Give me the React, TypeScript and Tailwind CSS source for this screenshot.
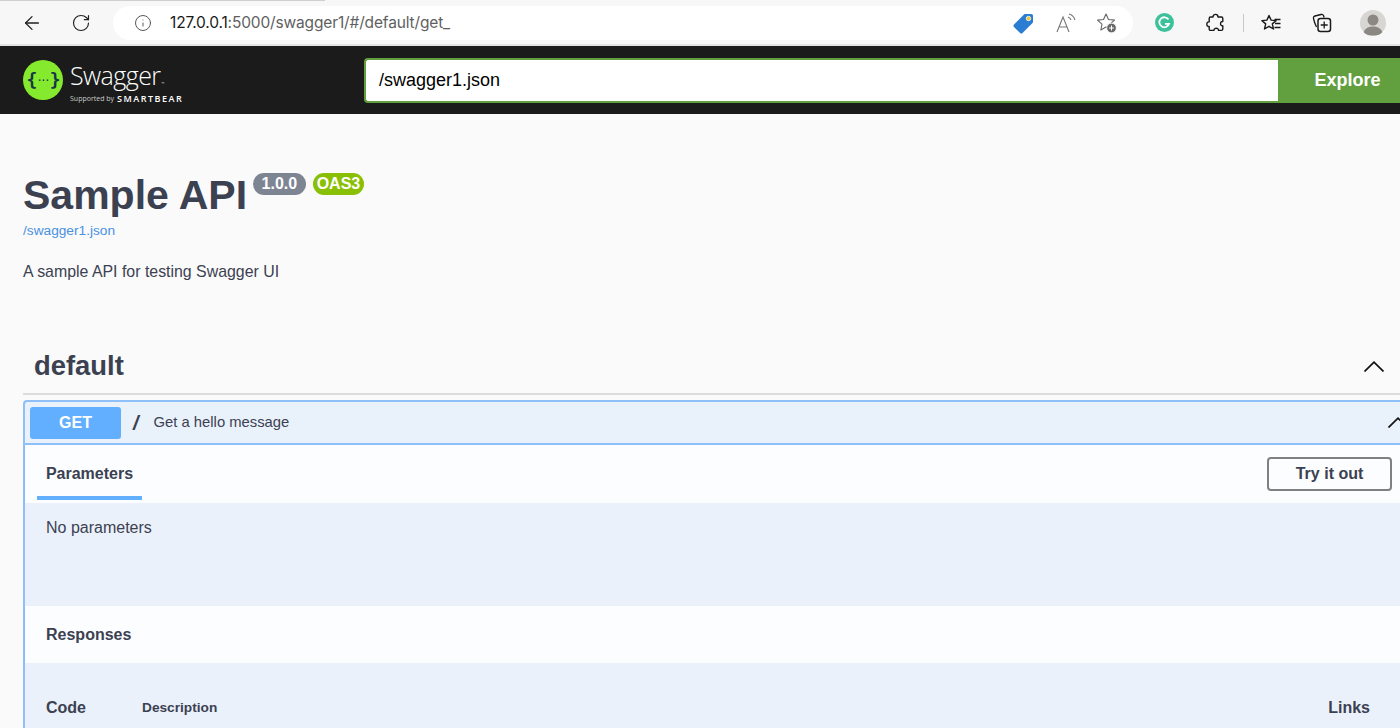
import { ArrowLeft, RotateCw, Info } from "lucide-react"

function Chevron({ className }: { className?: string }) {
  return (
    <svg width="20" height="11" viewBox="0 0 20 11" fill="none" stroke="#111" strokeWidth="1.700" className={className}>
      <path d="M.5 10.500 10 1.200l9.500 9.300" />
    </svg>
  )
}

function TagIcon() {
  return (
    <svg width="22" height="22" viewBox="0 0 22 22">
      <path d="M2 12.500 12 2.500c.4-.4.8-.5 1.300-.5h6c.9 0 1.700.8 1.700 1.700v6c0 .5-.2.9-.5 1.300l-10 10c-.7.7-1.700.7-2.400 0L2 15c-.7-.7-.7-1.800 0-2.500z" fill="#2b7cd3" />
      <circle cx="16.500" cy="6.500" r="2.200" fill="#f7c325" stroke="#fff" strokeWidth="0.800" />
    </svg>
  )
}

function ReadAloudIcon() {
  return (
    <svg width="20" height="20" viewBox="0 0 20 20" fill="none" stroke="#777" strokeWidth="1.100">
      <path d="M1 19 7 4l6 15M3.200 14h7.600" />
      <path d="M12 4c1.500.5 2.500 1.500 3 3M13 1c3 .7 5 2.700 6 6" />
    </svg>
  )
}

function FavAddIcon() {
  return (
    <svg width="22" height="22" viewBox="0 0 22 22" fill="none">
      <path d="M10 2l2.500 5.500 6 .6-4.500 4 1.200 5.900L10 15l-5.200 3 1.200-5.900-4.500-4 6-.6z" stroke="#666" strokeWidth="1.100" strokeLinejoin="round" />
      <circle cx="15.500" cy="16" r="4.800" fill="#666" stroke="#fff" strokeWidth="0.800" />
      <path d="M15.500 13.500v5M13 16h5" stroke="#fff" strokeWidth="1.100" />
    </svg>
  )
}

function GrammarlyIcon() {
  return (
    <svg width="19" height="19" viewBox="0 0 19 19" fill="none">
      <circle cx="9.500" cy="9.500" r="9.500" fill="#3dc19a" />
      <path d="M13.500 6.500a5 5 0 1 0 .6 4.300H10" stroke="#fff" strokeWidth="1.800" />
    </svg>
  )
}

function PuzzleIcon() {
  return (
    <svg width="19" height="20" viewBox="0 0 19 20" fill="none" stroke="#1a1a1a" strokeWidth="1.400" strokeLinejoin="round">
      <path d="M7 4c0-3.500 5-3.500 5 0h3.500c.8 0 1.300.6 1.300 1.400v3.200c-3-.6-3 4.800 0 4.200v3.200c0 .8-.6 1.400-1.300 1.400h-3c.3-2.800-4.800-2.800-4.500 0H4.500c-.8 0-1.300-.6-1.300-1.400v-2.500c-3.200.6-3.200-5.200 0-4.600V5.400C3.200 4.600 3.700 4 4.500 4z" />
    </svg>
  )
}

function FavoritesIcon() {
  return (
    <svg width="20" height="20" viewBox="0 0 20 20" fill="none" stroke="#1a1a1a" strokeWidth="1.400" strokeLinejoin="round">
      <path d="M8 1l2.100 4.600 5 .5-3.800 3.300 1.200 5.100L8 11.800l-4.500 2.700 1.200-5.100L.9 6.100l5-.5z" transform="translate(0 1.500)" />
      <path d="M13.500 6.500h6M14 10.500h5.500M13.500 14.500h6" />
    </svg>
  )
}

function CollectionsIcon() {
  return (
    <svg width="20" height="20" viewBox="0 0 20 20" fill="none" stroke="#1a1a1a" strokeWidth="1.300">
      <path d="M4.500 14C3 11 2 8 1.500 5.500c-.3-1.200.3-2.200 1.500-2.500L9 1.500c1.200-.3 2.200.2 2.600 1.300l.5 1.700" />
      <rect x="6" y="5.500" width="12.500" height="13" rx="2.500" strokeWidth="1.500" />
      <path d="M12.200 8.500v7M8.700 12h7" />
    </svg>
  )
}

function ProfileIcon() {
  return (
    <div className="flex h-[26px] w-[26px] items-center justify-center overflow-hidden rounded-full bg-[#d8d6d2]">
      <svg width="26" height="26" viewBox="0 0 26 26" fill="#8b8883">
        <circle cx="13" cy="10" r="5.500" />
        <path d="M3.500 24c0-5 4.500-7.500 9.500-7.500s9.500 2.500 9.500 7.500c-2 2-17 2-19 0z" />
      </svg>
    </div>
  )
}

function SwaggerLogo() {
  return (
    <div className="flex items-center">
      <div className="flex h-[40px] w-[40px] items-center justify-center rounded-full bg-[#85ea2d] pb-[2px] text-[18px] font-bold text-[#173647] [font-family:'DejaVu_Sans_Mono',monospace]">
        <span className="tracking-[-1px]">{"{"}</span>
        <span className="mx-px text-[8px] leading-none tracking-[-1px]">...</span>
        <span className="tracking-[-1px]">{"}"}</span>
      </div>
      <div className="ml-[7px] flex flex-col text-white">
        <div className="pt-[4px] text-[25px] leading-[28px] font-light tracking-[-0.55px] [font-family:'Open_Sans',sans-serif]">
          Swagger<span className="ml-px align-baseline text-[4px]">™</span>
        </div>
        <div className="mt-[-4px] flex h-[10px] items-center gap-[3px] [font-family:'Open_Sans',sans-serif]">
          <span className="text-[7px] leading-none text-[#ccc]">Supported by</span>
          <span className="text-[9px] leading-none font-semibold tracking-[1.5px]">SMARTBEAR</span>
        </div>
      </div>
    </div>
  )
}

function App() {
  return (
    <div className="h-[728px] w-[1400px] overflow-hidden bg-[#fafafa] [font-family:'Liberation_Sans',Arial,sans-serif]">
      {/* Browser toolbar */}
      <div className="flex h-[46px] flex-col border-b-2 border-[#e4e4e4] bg-[#f7f7f7]">
        <div className="h-px w-[325px] shrink-0 bg-[#cfcfcf]" />
        <div className="flex flex-1 items-center">
          <ArrowLeft className="ml-[21px] h-[22px] w-[22px] text-[#222]" strokeWidth={1.4} />
          <RotateCw className="ml-[28px] h-[20px] w-[20px] text-[#222]" strokeWidth={1.4} />
          <div className="ml-[22px] flex h-[34px] w-[1020px] items-center rounded-full bg-white">
            <Info className="ml-[21px] h-[18px] w-[18px] text-[#555]" strokeWidth={1.3} />
            <div className="ml-[18px] flex-1 text-[15.5px] text-[#5f5f5f] [font-family:'Inter',sans-serif] tracking-[-0.15px]">
              <span className="text-[#1a1a1a]">127.0.0.1</span>:5000/swagger1/#/default/get_
            </div>
            <TagIcon />
            <div className="ml-[22px]"><ReadAloudIcon /></div>
            <div className="mr-[15px] ml-[20px]"><FavAddIcon /></div>
          </div>
          <div className="ml-[22px]"><GrammarlyIcon /></div>
          <div className="ml-[32px]"><PuzzleIcon /></div>
          <div className="ml-[18px] h-[18px] w-px bg-[#c8c8c8]" />
          <div className="ml-[17px]"><FavoritesIcon /></div>
          <div className="ml-[31px]"><CollectionsIcon /></div>
          <div className="ml-[28px]"><ProfileIcon /></div>
        </div>
      </div>

      {/* Swagger top bar */}
      <div className="flex h-[68px] items-center bg-[#1b1b1b] pl-[23px]">
        <div className="w-[341px]"><SwaggerLogo /></div>
        <div className="flex h-[45px] flex-1">
          <div className="flex flex-1 items-center rounded-l-[4px] border-2 border-r-0 border-[#62a03f] bg-white pl-[13px] text-[18px] text-black">
            /swagger1.json
          </div>
          <div className="flex w-[122px] items-center justify-center bg-[#62a03f] pl-[17px] text-[18px] font-bold text-white">
            Explore
          </div>
        </div>
      </div>

      {/* API info */}
      <div className="pl-[23px]">
        <div className="mt-[58px] flex items-start">
          <h1 className="text-[41px] leading-[46px] font-bold text-[#3b4151]">Sample API</h1>
          <span className="mt-px ml-[6px] flex h-[22px] items-center rounded-full bg-[#7d8492] px-[8.5px] text-[16px] font-bold text-white">1.0.0</span>
          <span className="mt-px ml-[7px] flex h-[22px] items-center rounded-full bg-[#89bf04] px-[4px] text-[16px] font-bold text-white">OAS3</span>
        </div>
        <div className="mt-[5px] text-[13.7px] leading-[16px] text-[#4990e2]">/swagger1.json</div>
        <p className="mt-[24px] text-[15.9px] leading-[18px] text-[#3b4151]">A sample API for testing Swagger UI</p>
      </div>

      {/* Tag section */}
      <div className="mt-[59px] ml-[23px]">
        <div className="flex h-[55px] items-center border-b-2 border-[#dcdcdd] pb-[1px] pl-[11px]">
          <h2 className="flex-1 text-[27.4px] font-bold text-[#3b4151]">default</h2>
          <Chevron className="mr-[16px]" />
        </div>

        {/* Operation block */}
        <div className="mt-[5px] w-[1385px] rounded-t-[4px] border-2 border-b-0 border-[#8fc0f7] bg-[#e9f1fb] [border-right:none]">
          <div className="flex h-[43px] items-center border-b-2 border-[#8fc0f7] pl-[5px]">
            <div className="flex h-[32px] w-[91px] items-center justify-center rounded-[3px] bg-[#61affe] text-[16px] font-bold text-white">GET</div>
            <span className="ml-[12px] text-[20px] font-bold text-[#3b4151] italic">/</span>
            <span className="ml-[15px] flex-1 text-[14.8px] text-[#3b4151]">Get a hello message</span>
            <Chevron className="shrink-0" />
          </div>

          <div className="flex h-[58px] items-center justify-between bg-[#fcfdff] pr-[16px] shadow-[0_1px_2px_rgba(0,0,0,0.1)]">
            <div className="relative ml-[12px] flex h-full w-[105px] items-center justify-center text-[16px] font-bold text-[#3b4151]">
              Parameters
              <div className="absolute right-0 bottom-[3px] left-0 h-[4px] bg-[#61affe]" />
            </div>
            <button className="mb-[1px] h-[34px] w-[125px] rounded-[4px] border-2 border-[#808080] text-[16px] font-bold text-[#3b4151]">Try it out</button>
          </div>

          <div className="flex h-[103px] bg-[#ebf1fb] pt-[16px] pl-[21px] text-[16px] leading-[18px] text-[#3b4151]">No parameters</div>

          <div className="flex h-[57px] items-center bg-[#fcfdff] pl-[21px] text-[16px] font-bold text-[#3b4151] shadow-[0_1px_2px_rgba(0,0,0,0.1)]">Responses</div>

          <div className="flex h-[70px] items-start bg-[#ebf1fb] pt-[36px] pr-[38px] pl-[21px] font-bold text-[#3b4151]">
            <span className="w-[96px] text-[16px] leading-[18px]">Code</span>
            <span className="flex-1 text-[13.7px] leading-[18px]">Description</span>
            <span className="text-[16px] leading-[18px]">Links</span>
          </div>
        </div>
      </div>
    </div>
  )
}

export default App
